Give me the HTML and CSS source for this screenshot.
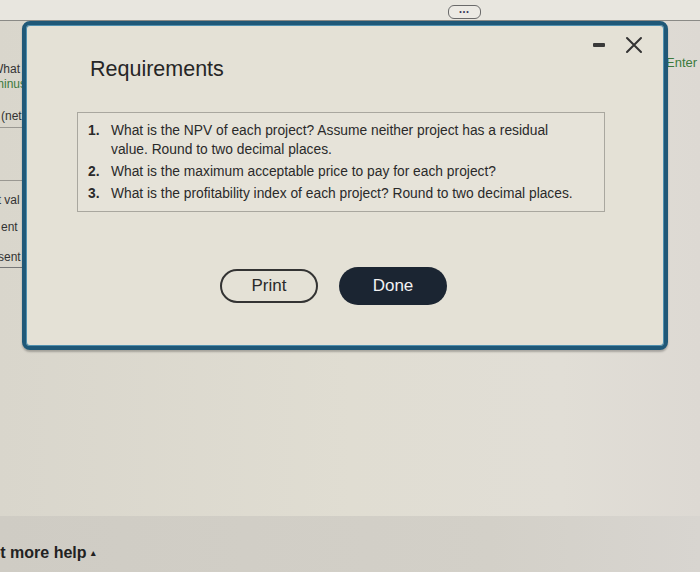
FILE: index.html
```html
<!DOCTYPE html>
<html>
<head>
<meta charset="utf-8">
<link rel="stylesheet" href="styles.css">
</head>
<body>
<div class="screen">
  <div class="topbar">
    <span class="grip">•••</span>
  </div>
  <div class="content">
    <div class="side">
      <div class="frag f1">What is</div>
      <div class="frag f2 green">minus</div>
      <div class="frag f3">(net</div>
      <div class="rule r1"></div>
      <div class="rule r2"></div>
      <div class="frag f4">nt val</div>
      <div class="frag f5">ent</div>
      <div class="frag f6">sent</div>
      <div class="rule r3"></div>
    </div>
    <div class="right">
      <div class="enter">Enter</div>
    </div>
  </div>
  <div class="footer">
    <span class="help">Get more help <span class="caret">&#9652;</span></span>
  </div>

  <div class="modal">
    <div class="controls">
      <span class="minimize"></span>
      <svg class="close" width="18" height="18" viewBox="0 0 18 18"><path d="M2 2 L16 16 M16 2 L2 16" stroke="#333" stroke-width="2" stroke-linecap="round"/></svg>
    </div>
    <h1 class="title">Requirements</h1>
    <div class="reqbox">
      <div class="req"><span class="num">1.</span><span class="txt">What is the NPV of each project? Assume neither project has a residual value. Round to two decimal places.</span></div>
      <div class="req"><span class="num">2.</span><span class="txt">What is the maximum acceptable price to pay for each project?</span></div>
      <div class="req"><span class="num">3.</span><span class="txt">What is the profitability index of each project? Round to two decimal places.</span></div>
    </div>
    <div class="buttons">
      <button class="btn print">Print</button>
      <button class="btn done">Done</button>
    </div>
  </div>
</div>
</body>
</html>
```

FILE: styles.css
```css
* { box-sizing: border-box; }
html, body {
  margin: 0;
  padding: 0;
}
body {
  width: 700px;
  height: 572px;
  overflow: hidden;
  font-family: "Liberation Sans", Arial, sans-serif;
  color: #2b2b2b;
}
.screen {
  position: relative;
  width: 700px;
  height: 572px;
  background: linear-gradient(90deg, #d9d6cc 0%, #e0ddd2 50%, #e1ded6 80%, #ddd9d3 100%);
  display: flex;
  flex-direction: column;
}
.topbar {
  height: 21px;
  background: #e8e6df;
  border-bottom: 1px solid #8a8a86;
  position: relative;
  flex: none;
}
.grip {
  position: absolute;
  left: 448px;
  top: 5px;
  width: 33px;
  height: 14px;
  border: 1px solid #6a6a6a;
  border-radius: 6px;
  background: #eceae4;
  font-size: 7px;
  line-height: 12px;
  text-align: center;
  color: #335;
  letter-spacing: 1px;
}
.content {
  flex: 1;
  display: flex;
  justify-content: space-between;
}
.side {
  width: 24px;
  overflow: hidden;
  font-size: 12px;
  color: #333;
  padding-top: 41px;
}
.frag {
  white-space: nowrap;
  height: 15px;
  line-height: 15px;
}
.green { color: #3c7a3c; }
.f1 { margin-left: -8px; }
.f2 { margin-left: -6px; }
.f3 { margin-left: 1px; margin-top: 17px; }
.rule { height: 1px; background: #9a9892; }
.r1 { margin-top: 3px; }
.r2 { margin-top: 52px; }
.f4 { margin-left: -9px; margin-top: 12px; }
.f5 { margin-left: 1px; margin-top: 12px; }
.f6 { margin-left: -2px; margin-top: 15px; }
.r3 { margin-top: 2px; background: #777; }
.right {
  width: 34px;
  overflow: hidden;
  padding-top: 34px;
}
.enter {
  font-size: 13px;
  color: #3c7a3c;
  white-space: nowrap;
}
.footer {
  flex: none;
  height: 56px;
  background: linear-gradient(90deg, #cfccc4, #d3d0c8 70%, #d8d5d0);
  overflow: hidden;
  padding-top: 28px;
}
.help {
  display: inline-block;
  margin-left: -21px;
  font-size: 16px;
  font-weight: bold;
  color: #222;
  white-space: nowrap;
}
.caret { font-size: 9px; vertical-align: 2px; }

.modal {
  position: absolute;
  left: 22px;
  top: 21px;
  width: 646px;
  height: 329px;
  background: #e4e1d6;
  border: 4px solid #1f5878;
  border-radius: 8px;
  box-shadow: 0 0 0 1px #4f8fae inset, 0 2px 2px rgba(0,0,0,0.25);
  padding: 31px 0 0 64px;
}
.controls {
  position: absolute;
  top: 11px;
  right: 21px;
  display: flex;
  align-items: center;
  gap: 20px;
}
.minimize {
  width: 12px;
  height: 4px;
  background: #3a3a3a;
  border-radius: 1px;
}
.title {
  margin: 0;
  font-size: 21.5px;
  line-height: 26px;
  font-weight: normal;
  color: #262626;
}
.reqbox {
  margin: 30px 0 0 -13px;
  width: 528px;
  border: 1px solid #a9a79f;
  background: #e6e3d9;
  padding: 8px 10px 8px 10px;
}
.req {
  display: flex;
  font-size: 13.8px;
  line-height: 19px;
  color: #2a2a2a;
}
.req + .req { margin-top: 3px; }
.num {
  width: 23px;
  flex: none;
  font-weight: bold;
}
.txt { flex: 1; padding-right: 10px; }
.buttons {
  margin: 55px 0 0 130px;
  display: flex;
  align-items: center;
  gap: 21px;
}
.btn {
  font-family: "Liberation Sans", Arial, sans-serif;
  font-size: 17px;
  border-radius: 20px;
  cursor: pointer;
}
.print {
  width: 98px;
  height: 34px;
  background: transparent;
  border: 2px solid #333;
  color: #2a2a2a;
}
.done {
  width: 108px;
  height: 38px;
  background: #1b2532;
  border: none;
  color: #f2f2f2;
}
```
